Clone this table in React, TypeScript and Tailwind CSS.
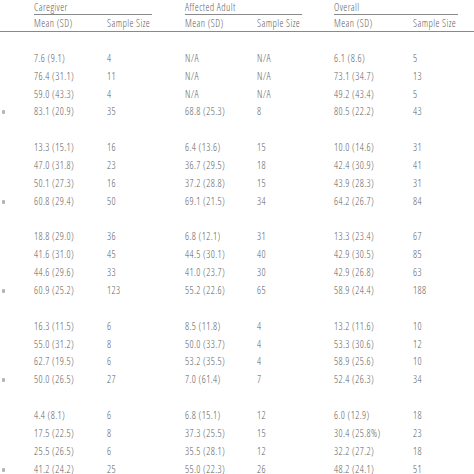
import React from "react";

type Row = [string, string, string, string, string, string];

const groups: Row[][] = [
  [
    ["7.6 (9.1)", "4", "N/A", "N/A", "6.1 (8.6)", "5"],
    ["76.4 (31.1)", "11", "N/A", "N/A", "73.1 (34.7)", "13"],
    ["59.0 (43.3)", "4", "N/A", "N/A", "49.2 (43.4)", "5"],
    ["83.1 (20.9)", "35", "68.8 (25.3)", "8", "80.5 (22.2)", "43"],
  ],
  [
    ["13.3 (15.1)", "16", "6.4 (13.6)", "15", "10.0 (14.6)", "31"],
    ["47.0 (31.8)", "23", "36.7 (29.5)", "18", "42.4 (30.9)", "41"],
    ["50.1 (27.3)", "16", "37.2 (28.8)", "15", "43.9 (28.3)", "31"],
    ["60.8 (29.4)", "50", "69.1 (21.5)", "34", "64.2 (26.7)", "84"],
  ],
  [
    ["18.8 (29.0)", "36", "6.8 (12.1)", "31", "13.3 (23.4)", "67"],
    ["41.6 (31.0)", "45", "44.5 (30.1)", "40", "42.9 (30.5)", "85"],
    ["44.6 (29.6)", "33", "41.0 (23.7)", "30", "42.9 (26.8)", "63"],
    ["60.9 (25.2)", "123", "55.2 (22.6)", "65", "58.9 (24.4)", "188"],
  ],
  [
    ["16.3 (11.5)", "6", "8.5 (11.8)", "4", "13.2 (11.6)", "10"],
    ["55.0 (31.2)", "8", "50.0 (33.7)", "4", "53.3 (30.6)", "12"],
    ["62.7 (19.5)", "6", "53.2 (35.5)", "4", "58.9 (25.6)", "10"],
    ["50.0 (26.5)", "27", "7.0 (61.4)", "7", "52.4 (26.3)", "34"],
  ],
  [
    ["4.4 (8.1)", "6", "6.8 (15.1)", "12", "6.0 (12.9)", "18"],
    ["17.5 (22.5)", "8", "37.3 (25.5)", "15", "30.4 (25.8%)", "23"],
    ["25.5 (26.5)", "6", "35.5 (28.1)", "12", "32.2 (27.2)", "18"],
    ["41.2 (24.2)", "25", "55.0 (22.3)", "26", "48.2 (24.1)", "51"],
  ],
];

const cols = "grid grid-cols-[34px_73px_78px_72px_77px_79px_61px]";

export default function App() {
  return (
    <div
      className="w-[474px] h-[474px] overflow-hidden bg-white text-[10px] text-[#5e5e5e] font-light font-stretch-[75%] tracking-[0.4px]"
      style={{ fontFamily: '"Open Sans", "Liberation Sans", sans-serif' }}
    >
      <div className={`${cols} h-[15px] leading-[14px]`}>
        <div />
        <div className="col-span-2 pr-[33px]">
          <div className="border-b border-[#8a8a8a] h-[15px]">Caregiver</div>
        </div>
        <div className="col-span-2 pr-[32px]">
          <div className="border-b border-[#8a8a8a] h-[15px]">Affected Adult</div>
        </div>
        <div className="col-span-2 pr-[16px]">
          <div className="border-b border-[#8a8a8a] h-[15px]">Overall</div>
        </div>
      </div>
      <div className={`${cols} h-[17px] leading-[16px] border-b border-[#8a8a8a]`}>
        <div />
        <div>Mean (SD)</div>
        <div>Sample Size</div>
        <div>Mean (SD)</div>
        <div>Sample Size</div>
        <div>Mean (SD)</div>
        <div>Sample Size</div>
      </div>
      {groups.map((g, gi) => (
        <div key={gi}>
          <div className="h-[17.87px]" />
          {g.map((r, ri) => (
            <div key={ri} className={`${cols} h-[17.87px] leading-[17.87px]`}>
              <div className="flex items-center">
                {ri === 3 ? <span className="ml-[2px] w-[3px] h-[4px] rounded-[1px] bg-[#b5b5b5]" /> : null}
              </div>
              {r.map((c, ci) => (
                <div key={ci}>{c}</div>
              ))}
            </div>
          ))}
        </div>
      ))}
    </div>
  );
}
